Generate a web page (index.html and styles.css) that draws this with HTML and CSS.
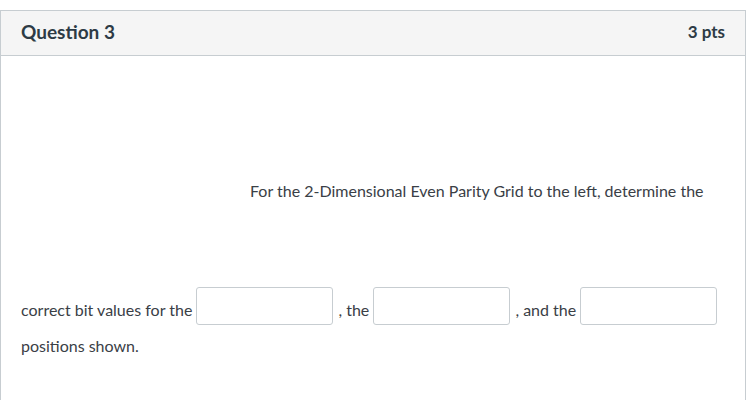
FILE: index.html
```
<!DOCTYPE html>
<html>
<head>
<meta charset="utf-8">
<link rel="stylesheet" href="styles.css">
</head>
<body>
<div class="question">
  <div class="q-header">
    <span class="q-title">Question 3</span>
    <span class="q-pts">3 pts</span>
  </div>
  <div class="q-body">
    <p class="q-text"><span class="grid-img"></span>For the 2-Dimensional Even Parity Grid to the left, determine the correct bit values for the <input class="blank" type="text">, the <input class="blank" type="text">, and the <input class="blank" type="text"> positions shown.</p>
  </div>
</div>
</body>
</html>
```

FILE: styles.css
```
html, body {
  margin: 0;
  padding: 0;
  background: #fff;
}
body {
  font-family: Lato, "Open Sans", sans-serif;
  color: #2d3b45;
  padding-top: 10px;
}
.question {
  width: 746px;
  border: 1px solid #c7cdd1;
  border-bottom: none;
  box-sizing: border-box;
  height: 390px;
}
.q-header {
  display: flex;
  justify-content: space-between;
  align-items: center;
  height: 45px;
  padding: 0 20px 4px;
  box-sizing: border-box;
  background: #f5f5f5;
  border-bottom: 1px solid #c7cdd1;
  font-weight: bold;
}
.q-title {
  font-size: 19px;
}
.q-pts {
  font-size: 17px;
}
.q-body {
  padding: 0 20px;
}
.q-text {
  margin: 0;
  padding-top: 40px;
  font-size: 16px;
  line-height: 1.5;
  color: #3a4046;
}
.grid-img {
  display: inline-block;
  width: 229px;
  height: 194px;
  vertical-align: middle;
}
.blank {
  width: 137px;
  height: 38px;
  box-sizing: border-box;
  border: 1px solid #c7cdd1;
  border-radius: 3px;
  vertical-align: middle;
  margin: 0 5px 6px 0;
  padding: 0 6px;
  font: inherit;
  position: relative;
  top: -3px;
}
```
